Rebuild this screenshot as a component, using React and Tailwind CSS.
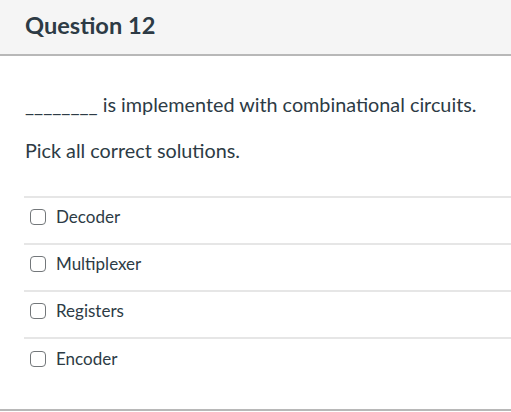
import React from 'react';

const answers = ['Decoder', 'Multiplexer', 'Registers', 'Encoder'];

export default function App() {
  return (
    <div className="w-[511px] h-[412px] bg-white text-[#2d3b45] overflow-hidden" style={{ fontFamily: 'Lato, "Noto Sans", sans-serif' }}>
      {/* Header */}
      <div className="h-[56px] bg-[#f5f5f5] border-b-2 border-[#b8b8b8] flex items-center px-[25px] pb-[2px]">
        <h2 className="text-[23.6px] font-bold leading-none">Question 12</h2>
      </div>

      {/* Question body */}
      <div className="pl-[25px] pt-[36px]">
        <p className="text-[19.8px] leading-[24px]">________ is implemented with combinational circuits.</p>
        <p className="text-[19.8px] leading-[24px] mt-[22px]">Pick all correct solutions.</p>
      </div>

      {/* Answers */}
      <div className="ml-[24px] mt-[34px] h-[213px] border-t-2 border-[#e6e6e6]">
        {answers.map((a, i) => (
          <label
            key={a}
            className={`flex items-center h-[47px] pl-[6px] pb-[8px] gap-[10px] ${i < answers.length - 1 ? 'border-b-2 border-[#e6e6e6]' : ''}`}
          >
            <span className="w-[16px] h-[16px] rounded-[4px] border-[1.5px] border-[#73777a] bg-white" />
            <span className="text-[17px] leading-[20px]">{a}</span>
          </label>
        ))}
      </div>
      <div className="border-b-2 border-[#b8b8b8]" />
    </div>
  );
}
